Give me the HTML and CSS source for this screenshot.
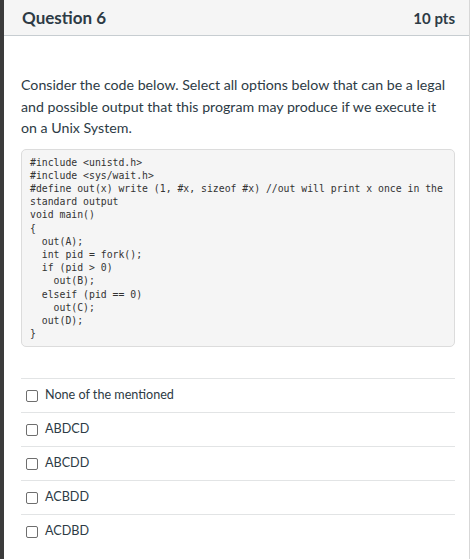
FILE: index.html
```html
<!DOCTYPE html>
<html>
<head>
<meta charset="utf-8">
<link rel="stylesheet" href="styles.css">
</head>
<body>
<div class="question">
  <div class="header">
    <span class="title">Question 6</span>
    <span class="pts">10 pts</span>
  </div>
  <div class="content">
    <p class="prompt">Consider the code below. Select all options below that can be a legal and possible output that this program may produce if we execute it on a Unix System.</p>
    <pre class="code">#include &lt;unistd.h&gt;
#include &lt;sys/wait.h&gt;
#define out(x) write (1, #x, sizeof #x) //out will print x once in the
standard output
void main()
{
  out(A);
  int pid = fork();
  if (pid &gt; 0)
    out(B);
  elseif (pid == 0)
    out(C);
  out(D);
}</pre>
    <div class="answers">
      <label class="answer"><span class="box"></span><span>None of the mentioned</span></label>
      <label class="answer"><span class="box"></span><span>ABDCD</span></label>
      <label class="answer"><span class="box"></span><span>ABCDD</span></label>
      <label class="answer"><span class="box"></span><span>ACBDD</span></label>
      <label class="answer"><span class="box"></span><span>ACDBD</span></label>
    </div>
  </div>
</div>
</body>
</html>
```
FILE: styles.css
```css
html, body {
  margin: 0;
  padding: 0;
  background: #fff;
}
body {
  font-family: Lato, "Liberation Sans", sans-serif;
  color: #2d3b45;
}
.question {
  width: 465px;
  min-height: 559px;
  border-left: 4px solid #3b3b3b;
  border-right: 1px solid #d7d7d7;
  box-sizing: content-box;
}
.header {
  height: 35px;
  background: #f5f5f5;
  border-bottom: 1px solid #c7cdd1;
  display: flex;
  align-items: center;
  justify-content: space-between;
  padding: 0 14px 0 18px;
}
.title {
  font-weight: 700;
  font-size: 17px;
  color: #2d3b45;
}
.pts {
  font-weight: 700;
  font-size: 15px;
  color: #2d3b45;
}
.content {
  padding: 0 14px 0 17px;
}
.prompt {
  margin: 38px 0 0 0;
  font-size: 14.2px;
  line-height: 21.5px;
  color: #2d3b45;
}
.code {
  margin: 10px 0 0 0;
  background: #f5f5f5;
  border: 1px solid #dcdcdc;
  border-radius: 5px;
  padding: 6px 8px 6px 8px;
  font-family: "DejaVu Sans Mono", "Liberation Mono", monospace;
  font-size: 9.8px;
  line-height: 13.2px;
  color: #333;
  white-space: pre-wrap;
}
.answers {
  margin-top: 31px;
}
.answer {
  display: flex;
  align-items: center;
  gap: 7px;
  height: 33px;
  box-sizing: content-box;
  border-top: 1px solid #e2e4e5;
  padding-left: 5px;
  font-size: 12.6px;
  color: #2d3b45;
}
.answer span:last-child {
  margin-top: -2px;
}
.box {
  width: 10px;
  height: 10px;
  border: 1px solid #6e6e6e;
  border-radius: 2px;
  background: #fff;
  flex: none;
}
```
